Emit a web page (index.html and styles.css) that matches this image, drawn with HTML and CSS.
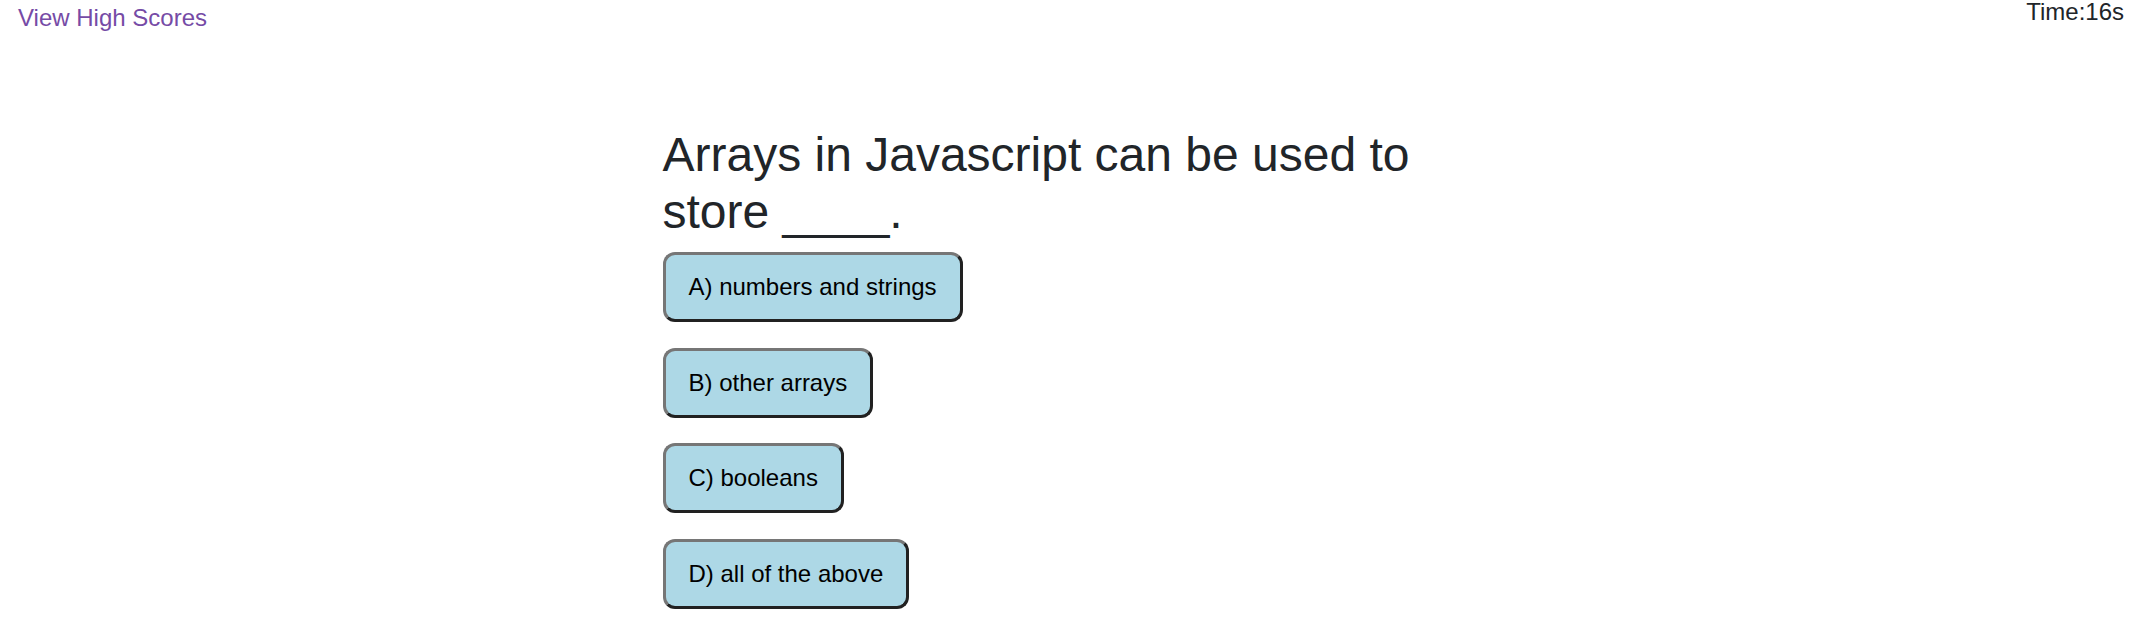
FILE: index.html
```html
<!DOCTYPE html>
<html lang="en">
<head>
    <meta charset="UTF-8">
    <meta name="viewport" content="width=device-width, initial-scale=1.0">
    <title>Code Quiz</title>
    <link rel="stylesheet" href="styles.css">
</head>
<body>
    <header class="top-bar">
        <a href="#" class="high-scores">View High Scores</a>
        <p class="timer">Time:<span id="time">16</span>s</p>
    </header>

    <main class="quiz">
        <h1 class="question">Arrays in Javascript can be used to store ____.</h1>
        <div class="choices">
            <button class="choice">A) numbers and strings</button>
            <button class="choice">B) other arrays</button>
            <button class="choice">C) booleans</button>
            <button class="choice">D) all of the above</button>
        </div>
    </main>
</body>
</html>
```

FILE: styles.css
```css
body {
    font-family: Arial, "Liberation Sans", sans-serif;
    margin: 0;
    color: #212529;
    background-color: white;
}
.top-bar {
    display: flex;
    justify-content: space-between;
    align-items: flex-start;
    padding: 0 7px 0 18px;
}
.high-scores {
    font-size: 24px;
    line-height: 24px;
    margin-top: 6px;
    color: #764ba6;
    text-decoration: none;
}
.timer {
    font-size: 24px;
    line-height: 24px;
    margin: 0;
}
.quiz {
    width: 806px;
    margin: 0 auto;
}
.question {
    font-size: 48px;
    font-weight: normal;
    line-height: 57px;
    margin: 96px 0 12px 0;
}
.choices {
    display: flex;
    flex-direction: column;
    align-items: flex-start;
    gap: 25.7px;
}
.choice {
    font-family: Arial, "Liberation Sans", sans-serif;
    font-size: 24px;
    line-height: 28px;
    color: black;
    background-color: lightblue;
    border: 3px outset #767676;
    border-radius: 12px;
    padding: 18px 23px;
    cursor: pointer;
}
```
